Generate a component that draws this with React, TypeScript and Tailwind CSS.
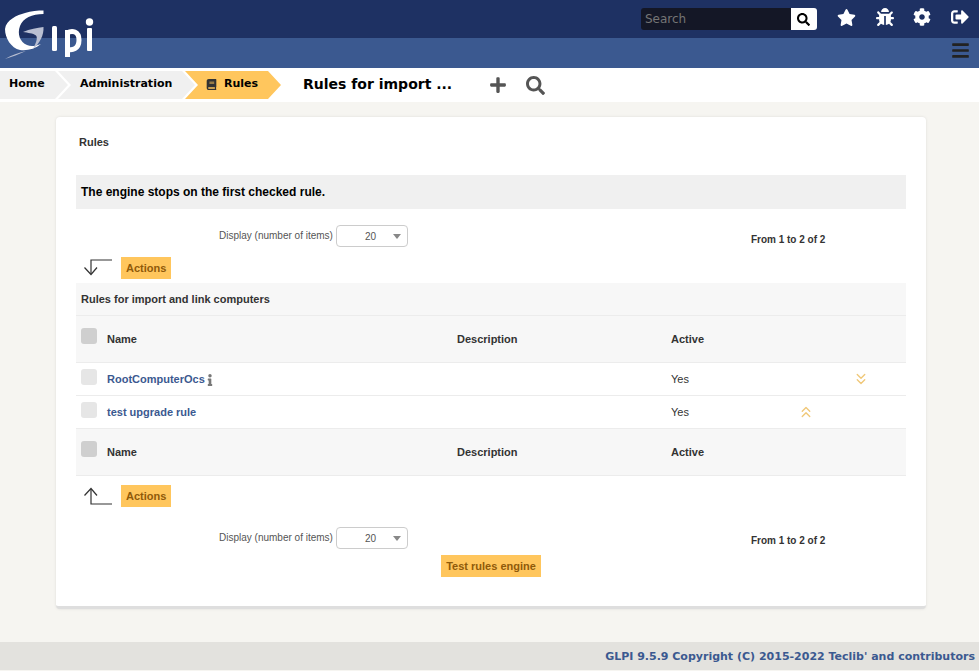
import { FaBars, FaBook, FaBug, FaCog, FaInfo, FaPlus, FaSearch, FaSignOutAlt, FaStar } from "react-icons/fa";
import { ChevronsDown, ChevronsUp } from "lucide-react";

const dejavu = "font-['DejaVu_Sans',sans-serif]";

function Logo() {
  return (
    <svg width="100" height="62" viewBox="0 0 100 62" className="absolute left-0 top-[5px]">
      <path d="M43.5 5.5 V9 C32 9 23 13 20 21 C17 29 20 37 27 40 C31 42 36 41 41 39 C35 44 27 46 20 45 C11 43 5 33 5 24 C6 15 17 10 25 8 C31 6 38 5.5 43.5 5.5 Z" fill="#fff" />
      <path d="M23 27 C30 24 37 23 43.5 22 C44 30 40 38 33 44 C36 38 38 33 36 30.5 C33 28 28 28 23 27 Z" fill="#b9bfd2" />
      <path d="M5 54 C12 50 18 48 26 46 C19 49 12 52 5 54 Z" fill="#b9bfd2" />
      <rect x="52" y="21" width="5" height="25" rx="1.5" fill="#fff" />
      <path d="M67.5 25 V52" stroke="#fff" strokeWidth="5" />
      <path d="M67 28 C72 25 79 26 79 35 C79 44 72 46 67 44" stroke="#fff" strokeWidth="5" fill="none" />
      <circle cx="89.5" cy="17" r="3.7" fill="#fff" />
      <rect x="87" y="23" width="5" height="23" rx="1" fill="#fff" />
    </svg>
  );
}

function OrangeButton({ label, className = "" }: { label: string; className?: string }) {
  return (
    <button className={`h-[22px] bg-[#ffc65d] px-[5px] text-[11px] font-bold text-[#8f5a0a] ${className}`}>
      {label}
    </button>
  );
}

function ArrowDown() {
  return (
    <svg width="36" height="22" viewBox="0 0 36 22" fill="none" stroke="#333" strokeWidth="1.2">
      <path d="M36 3 H15 V17" />
      <path d="M8.5 10.5 L15 17.5 L21 10.5" />
    </svg>
  );
}

function ArrowUp() {
  return (
    <svg width="36" height="22" viewBox="0 0 36 22" fill="none" stroke="#333" strokeWidth="1.2">
      <path d="M36 19 H15 V4" />
      <path d="M8.5 10.5 L15 3.5 L21 10.5" />
    </svg>
  );
}

function Pager({ className = "", fromClass = "" }: { className?: string; fromClass?: string }) {
  return (
    <div className={`flex h-[22px] text-[10px] text-[#555] ${className}`}>
      <div className="ml-[143px] flex items-center">
        <span className="mr-[3px] leading-[20px]">Display (number of items)</span>
        <div className="relative h-[22px] w-[72px] rounded-[4px] border border-[#ccc] bg-white">
          <span className="absolute left-[28px] top-[4px] leading-[14px]">20</span>
          <span className="absolute right-[6px] top-[8px] h-0 w-0 border-x-[4px] border-t-[5px] border-x-transparent border-t-[#888]" />
        </div>
      </div>
      <div className={`ml-[343px] font-bold leading-[12px] text-[#333] ${fromClass}`}>From 1 to 2 of 2</div>
    </div>
  );
}

function CheckBox({ dark = false }: { dark?: boolean }) {
  return <div className={`h-4 w-4 rounded-[3px] ${dark ? "bg-[#cfcfcf]" : "bg-[#e6e6e6]"}`} />;
}

function HeadRow() {
  return (
    <tr className="h-[47px] border-b border-[#ececec] bg-[#f7f7f7] font-bold text-[#333]">
      <td className="pl-[5px] align-top">
        <div className="pt-[12px]">
          <CheckBox dark />
        </div>
      </td>
      <td className="px-[5px] pt-[2px]">Name</td>
      <td className="px-[5px] pt-[2px]">Description</td>
      <td className="px-[5px] pt-[2px]">Active</td>
      <td />
      <td />
    </tr>
  );
}

const rules = [
  { name: "RootComputerOcs", info: true, up: false, down: true },
  { name: "test upgrade rule", info: false, up: true, down: false },
];

export default function App() {
  return (
    <div className="flex h-[671px] flex-col overflow-hidden bg-[#f6f5f1] font-['Liberation_Sans',sans-serif]">
      <header className="relative">
        <div className="flex h-[38px] items-start justify-end bg-[#1e3163]">
          <div className={`mt-[8px] flex h-[22px] w-[176px] overflow-hidden rounded-[3px] ${dejavu}`}>
            <div className="flex w-[150px] items-center bg-[#141726] pl-[4px] text-[12px] text-[#757575]">Search</div>
            <div className="flex w-[26px] items-center justify-center bg-white text-black">
              <FaSearch size={13} />
            </div>
          </div>
          <div className="ml-[20px] mr-[10px] mt-[8px] flex h-[18px] items-center gap-[19.7px] text-white">
            <FaStar size={19} />
            <FaBug size={18} />
            <FaCog size={18} />
            <FaSignOutAlt size={18} />
          </div>
        </div>
        <div className="flex h-[30px] items-center justify-end bg-[#3b5990] pb-[6px] pr-[9px] text-[#222]">
          <FaBars size={19} />
        </div>
        <Logo />
      </header>

      <nav className={`flex h-[34px] items-center bg-white text-[11px] font-bold text-black ${dejavu}`}>
        <div className="flex h-[28px] w-[68px] items-center bg-[#f0f0f0] pb-[1px] pl-[9px] [clip-path:polygon(0_0,55px_0,68px_14px,55px_28px,0_28px)]">
          Home
        </div>
        <div className="-ml-[10px] flex h-[28px] w-[137px] items-center bg-[#f0f0f0] pb-[1px] pl-[22px] [clip-path:polygon(0_0,124px_0,137px_14px,124px_28px,0_28px,13px_14px)]">
          Administration
        </div>
        <div className="-ml-[10px] flex h-[28px] w-[96px] items-center gap-[7px] bg-[#ffc65d] pb-[1px] pl-[21px] [clip-path:polygon(0_0,83px_0,96px_14px,83px_28px,0_28px,13px_14px)]">
          <FaBook size={11} className="text-[#333]" />
          Rules
        </div>
        <div className="ml-[22px] w-[186px] pb-[2px] text-[14px]">Rules for import ...</div>
        <div className="flex items-center gap-[19px] text-[#555]">
          <FaPlus size={18} />
          <FaSearch size={19} />
        </div>
      </nav>

      <main className="mx-[56px] mt-[15px] h-[492px] w-[870px] rounded-[4px] border-b-[3px] border-[#dedede] bg-white px-[20px] pt-[18px] shadow-[0_0_3px_rgba(0,0,0,0.1)]">
        <div className="ml-[3px] text-[11px] font-bold leading-[14px] text-[#333]">Rules</div>
        <div className="mt-[26px] flex h-[34px] items-center bg-[#f0f0f0] px-[5px] text-[12px] font-bold text-black">
          The engine stops on the first checked rule.
        </div>
        <Pager className="mt-[16px]" fromClass="mt-[9px]" />
        <div className="mt-[10px] flex h-[22px] items-center">
          <ArrowDown />
          <OrangeButton label="Actions" className="ml-[9px]" />
        </div>
        <table className="mt-[4px] w-[830px] table-fixed border-collapse text-[11px]">
          <colgroup>
            <col className="w-[26px]" />
            <col className="w-[350px]" />
            <col className="w-[214px]" />
            <col className="w-[130px]" />
            <col className="w-[55px]" />
            <col className="w-[55px]" />
          </colgroup>
          <tbody>
            <tr className="h-[32px] border-b border-[#ececec] bg-[#f7f7f7] font-bold text-[#333]">
              <td colSpan={6} className="px-[5px]">Rules for import and link computers</td>
            </tr>
            <HeadRow />
            {rules.map((rule) => (
              <tr key={rule.name} className="h-[33px] border-b border-[#ececec] text-[#333]">
                <td className="pl-[5px] pt-[6px] align-top">
                  <CheckBox />
                </td>
                <td className="px-[5px] pt-[2px] font-bold text-[#3b5990]">
                  <span className="inline-flex items-center">
                    {rule.name}
                    {rule.info && <FaInfo size={12} className="-ml-[1px] text-[#777]" />}
                  </span>
                </td>
                <td />
                <td className="px-[5px] pt-[2px]">Yes</td>
                <td className="px-[1px] text-[#f0c878]">{rule.up && <ChevronsUp size={18} strokeWidth={1.8} />}</td>
                <td className="px-[1px] text-[#f0c878]">{rule.down && <ChevronsDown size={18} strokeWidth={1.8} />}</td>
              </tr>
            ))}
            <HeadRow />
          </tbody>
        </table>
        <div className="mt-[9px] flex h-[22px] items-center">
          <ArrowUp />
          <OrangeButton label="Actions" className="ml-[9px] pt-[2px]" />
        </div>
        <Pager className="mt-[20px]" fromClass="mt-[8px]" />
        <div className="mt-[6px] flex justify-center">
          <OrangeButton label="Test rules engine" className="w-[100px] whitespace-nowrap pt-[2px]" />
        </div>
      </main>

      <footer className={`mt-[33px] flex h-[28px] items-center justify-end bg-[#e3e2de] pr-[4px] pt-[2px] text-[11px] font-bold text-[#3b5990] ${dejavu}`}>
        GLPI 9.5.9 Copyright (C) 2015-2022 Teclib' and contributors
      </footer>
    </div>
  );
}
